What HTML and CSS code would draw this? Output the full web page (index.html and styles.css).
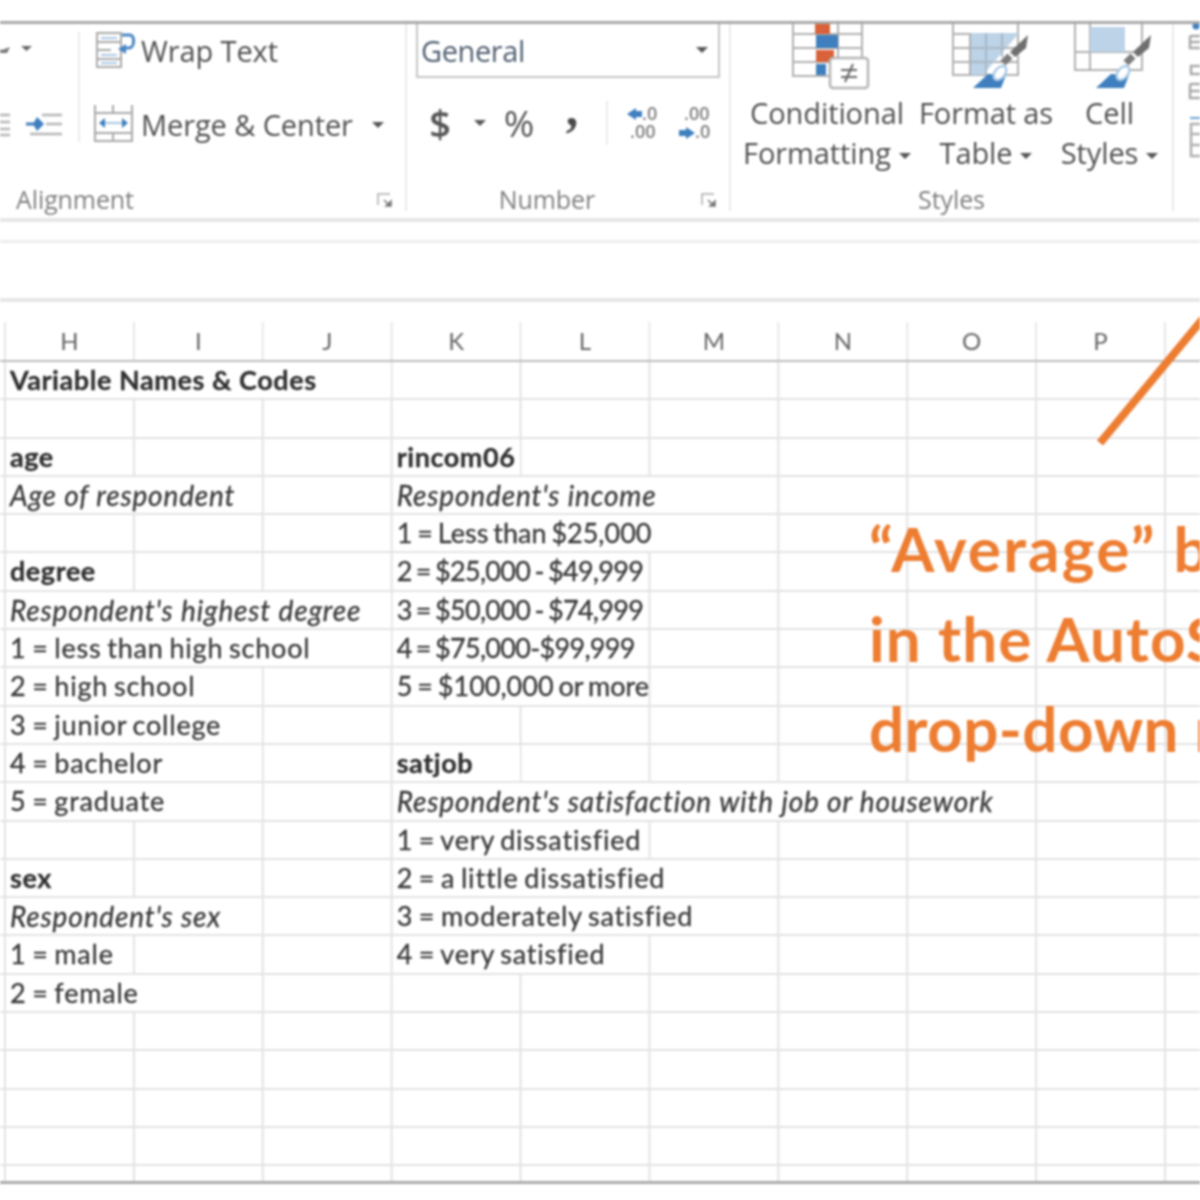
FILE: index.html
```html
<!DOCTYPE html>
<html lang="en">
<head>
<meta charset="utf-8">
<title>Excel ribbon and variable codes</title>
<link rel="stylesheet" href="styles.css">
</head>
<body>
<div class="page">
  <div class="ribbon">
    <section class="group g-align">
      <div class="group-body align-body">
        <div class="align-left">
          <svg class="ic" width="78" height="110" viewBox="0 32 78 110">
            <path d="M-6 47l8 3 8-3-3 6h-8z" fill="#777"/>
            <path d="M21 46h11l-5.500 5z" fill="#666"/>
            <g stroke="#b5b5b5" stroke-width="2.500">
              <path d="M-4 115h14M-4 122h14M-4 129h14M-4 135h14"/>
              <path d="M42 115h20M46 124h16M30 134h32"/>
            </g>
            <path d="M26 124h12" stroke="#3f7fbf" stroke-width="3"/>
            <path d="M37 117l7 7-7 7-4-7z" fill="#3f7fbf"/>
          </svg>
        </div>
        <div class="align-right">
          <div class="tool-row">
            <svg class="ic" width="42" height="40" viewBox="94 31 42 40">
              <rect x="97" y="33" width="24" height="34" fill="#fff" stroke="#a9a9a9" stroke-width="2"/>
              <path d="M97 42h24M97 50h14M97 59h24" stroke="#a9a9a9" stroke-width="2"/>
              <path d="M101 38h16M101 55h16M101 63h16" stroke="#a9c6e2" stroke-width="2"/>
              <path d="M122 35h8c5 0 5 13-1 13h-5" fill="none" stroke="#4a86c5" stroke-width="3"/>
              <path d="M118 49l8-5v10z" fill="#4a86c5"/>
            </svg>
            <span class="tool-label">Wrap Text</span>
          </div>
          <div class="tool-row merge-row">
            <svg class="ic" width="42" height="40" viewBox="94 105 42 40">
              <rect x="95" y="104" width="37" height="37" fill="#fff" stroke="#a9a9a9" stroke-width="2"/>
              <path d="M95 113h37M95 133h37M113 104v9M113 133v8" stroke="#a9a9a9" stroke-width="2"/>
              <path d="M102 123h24" stroke="#a9c6e2" stroke-width="2"/>
              <path d="M99 123l6-5v10zM128 123l-6-5v10z" fill="#3f7fbf"/>
            </svg>
            <span class="tool-label">Merge &amp; Center</span>
            <i class="caret merge-caret"></i>
          </div>
        </div>
      </div>
      <div class="group-foot foot-left">
        <span class="group-label">Alignment</span>
        <svg class="launcher" width="16" height="16" viewBox="0 0 16 16"><path d="M1 13V2h12" fill="none" stroke="#aaa" stroke-width="1.500"/><path d="M7 8l6 6M9 14h5V9z" stroke="#777" stroke-width="1.500" fill="#777"/></svg>
      </div>
    </section>

    <section class="group g-number">
      <div class="group-body">
        <div class="combo"><span>General</span><i class="caret"></i></div>
        <div class="num-row">
          <span class="sym sym-dollar">$</span>
          <i class="caret num-caret"></i>
          <span class="sym sym-pct">%</span>
          <span class="sym sym-comma">,</span>
          <span class="num-sep"></span>
          <svg class="ic dec-inc" width="36" height="40" viewBox="625 104 36 40">
            <path d="M627 115l9-6v3h6v6h-6v3z" fill="#3f7fbf"/>
            <text x="642" y="121" class="dec-text">.0</text>
            <text x="630" y="139" class="dec-text">.00</text>
          </svg>
          <svg class="ic dec-dec" width="36" height="40" viewBox="676 104 36 40">
            <text x="684" y="121" class="dec-text">.00</text>
            <path d="M695 134l-9-6v3h-7v6h7v3z" fill="#3f7fbf"/>
            <text x="695" y="139" class="dec-text">.0</text>
          </svg>
        </div>
      </div>
      <div class="group-foot foot-center foot-number">
        <span class="group-label">Number</span>
        <svg class="launcher" width="16" height="16" viewBox="0 0 16 16"><path d="M1 13V2h12" fill="none" stroke="#aaa" stroke-width="1.500"/><path d="M7 8l6 6M9 14h5V9z" stroke="#777" stroke-width="1.500" fill="#777"/></svg>
      </div>
    </section>

    <section class="group g-styles">
      <div class="group-body styles-body">
        <div class="style-btn btn-cond">
          <svg class="ic" width="168" height="66" viewBox="743 24 168 66">
            <path d="M793 24v52h69V24M793 34h69M793 48h69M793 62h69M838 24v52" fill="none" stroke="#b0b0b0" stroke-width="2"/>
            <rect x="815" y="23" width="15" height="11" fill="#d9623a"/>
            <rect x="816" y="35" width="22" height="13" fill="#3f7fbf"/>
            <rect x="816" y="50" width="18" height="12" fill="#d9623a"/>
            <rect x="816" y="64" width="10" height="11" fill="#3f7fbf"/>
            <rect x="830" y="58" width="38" height="30" rx="3" fill="#fff" stroke="#b5b5b5" stroke-width="2.500"/>
            <path d="M841 70h16M841 77h16M853 64l-8 18" stroke="#666" stroke-width="2" fill="none"/>
          </svg>
          <span class="style-line">Conditional</span>
          <span class="style-line">Formatting<i class="caret btn-caret"></i></span>
        </div>
        <div class="style-btn btn-table">
          <svg class="ic" width="132" height="66" viewBox="920 24 132 66">
            <path d="M953 24v51h65V24M953 34h65M953 48h65M953 62h65M970 34v41" fill="none" stroke="#b0b0b0" stroke-width="2"/>
            <path d="M971 33h48l-36 42h-12z" fill="#bcd3e8"/>
            <path d="M971 48h35M971 62h22M986 33v42M1002 33v24" stroke="#aab8c4" stroke-width="2"/>
            <path d="M1028 35l-2 13-11 9-5-5z" fill="#6f6f6f"/>
            <path d="M1010 56l-7 7" stroke="#7c7c7c" stroke-width="7"/>
            <path d="M973 88l15-14 18 1-5 13z" fill="#3f7fbf"/>
            <ellipse cx="1000" cy="73" rx="5" ry="8" transform="rotate(40 1000 73)" fill="#fff" stroke="#a9c9e6" stroke-width="2.500"/>
          </svg>
          <span class="style-line">Format as</span>
          <span class="style-line">Table<i class="caret btn-caret"></i></span>
        </div>
        <div class="style-btn btn-cell">
          <svg class="ic" width="97" height="66" viewBox="1061 24 97 66">
            <path d="M1075 24v46h67V24M1075 52h67M1090 24v46" fill="none" stroke="#b0b0b0" stroke-width="2"/>
            <rect x="1090" y="27" width="35" height="25" fill="#bcd3e8"/>
            <path d="M1151 35l-2 13-11 9-5-5z" fill="#6f6f6f"/>
            <path d="M1133 56l-7 7" stroke="#7c7c7c" stroke-width="7"/>
            <path d="M1096 88l15-14 18 1-5 13z" fill="#3f7fbf"/>
            <ellipse cx="1123" cy="73" rx="5" ry="8" transform="rotate(40 1123 73)" fill="#fff" stroke="#a9c9e6" stroke-width="2.500"/>
          </svg>
          <span class="style-line">Cell</span>
          <span class="style-line">Styles<i class="caret btn-caret"></i></span>
        </div>
      </div>
      <div class="group-foot foot-center"><span class="group-label">Styles</span></div>
    </section>

    <section class="g-rest">
      <svg class="ic" width="14" height="136" viewBox="1186 24 14 136">
        <circle cx="1196" cy="26" r="3.500" fill="#3f7fbf"/>
        <path d="M1190 36h10M1190 36v12h10M1190 42h10" stroke="#aaa" stroke-width="2.500" fill="none"/>
        <path d="M1200 66h-9v8h9M1190 84h10M1190 84v14h10M1190 91h10" stroke="#aaa" stroke-width="2.500" fill="none"/>
        <path d="M1190 118h10" stroke="#6fa3d6" stroke-width="2"/>
        <path d="M1200 124h-9v32h9M1191 134h9M1191 145h9" stroke="#b0b0b0" stroke-width="2.500" fill="none"/>
      </svg>
    </section>
  </div>

  <div class="formula-top"></div>
  <div class="formula-bar"></div>

  <div class="sheet">
    <div class="row col-head">
      <span class="head">H</span><span class="head">I</span><span class="head">J</span>
      <span class="head">K</span><span class="head">L</span><span class="head">M</span>
      <span class="head">N</span><span class="head">O</span><span class="head">P</span>
    </div>
    <div class="row"><span class="cell h s3 b">Variable Names &amp; Codes</span></div>
    <div class="row"></div>
    <div class="row"><span class="cell h b">age</span><span class="cell k b">rincom06</span></div>
    <div class="row"><span class="cell h s2 it">Age of respondent</span><span class="cell k s3 it">Respondent's income</span></div>
    <div class="row"><span class="cell k s3 flat">1 = Less than $25,000</span></div>
    <div class="row"><span class="cell h b">degree</span><span class="cell k s2 tight">2 = $25,000 - $49,999</span></div>
    <div class="row"><span class="cell h s3 it">Respondent's highest degree</span><span class="cell k s2 tight">3 = $50,000 - $74,999</span></div>
    <div class="row"><span class="cell h s3">1 = less than high school</span><span class="cell k s2 tight">4 = $75,000-$99,999</span></div>
    <div class="row"><span class="cell h s2">2 = high school</span><span class="cell k s2 flat">5 = $100,000 or more</span></div>
    <div class="row"><span class="cell h s2">3 = junior college</span></div>
    <div class="row"><span class="cell h s2">4 = bachelor</span><span class="cell k b">satjob</span></div>
    <div class="row"><span class="cell h s2">5 = graduate</span><span class="cell k s5 it">Respondent's satisfaction with job or housework</span></div>
    <div class="row"><span class="cell k s2">1 = very dissatisfied</span></div>
    <div class="row"><span class="cell h b">sex</span><span class="cell k s3">2 = a little dissatisfied</span></div>
    <div class="row"><span class="cell h s2 it">Respondent's sex</span><span class="cell k s3">3 = moderately satisfied</span></div>
    <div class="row"><span class="cell h">1 = male</span><span class="cell k s2">4 = very satisfied</span></div>
    <div class="row"><span class="cell h s2">2 = female</span></div>
    <div class="row"></div>
    <div class="row"></div>
    <div class="row"></div>
    <div class="row"></div>
    <div class="row row-tail"></div>
  </div>

  <svg class="arrow" width="1200" height="1200" viewBox="0 0 1200 1200"><path d="M1100 443L1206 315" stroke="#ed7d31" stroke-width="8" fill="none"/></svg>
  <div class="callout">
    <div class="line-a">“Average” button</div>
    <div class="line-b">in the AutoSum</div>
    <div class="line-c">drop-down menu</div>
  </div>
</div>
</body>
</html>
```
FILE: styles.css
```css
* { box-sizing: border-box; }
html, body { margin: 0; padding: 0; background: #fff; overflow: hidden; }
.page {
  position: relative;
  width: 1200px;
  height: 1200px;
  padding-top: 21px;
  overflow: hidden;
  filter: blur(0.9px);
  font-family: "Open Sans", "Liberation Sans", sans-serif;
  color: #505050;
}
.ic { display: block; flex: none; }

/* ribbon */
.ribbon {
  display: flex;
  align-items: flex-start;
  height: 201px;
  border-top: 3px solid #a9a9a9;
  border-bottom: 4px solid #e6e6e6;
}
.group {
  height: 187px;
  display: flex;
  flex-direction: column;
  border-right: 2px solid #ebebeb;
}
.g-align { width: 407px; }
.g-number { width: 324px; }
.g-styles { width: 443px; }
.g-rest { flex: 1; display: flex; justify-content: flex-end; padding-right: 0; }
.group-body { height: 161px; }
.group-foot { height: 26px; display: flex; align-items: center; position: relative; }
.group-label { font-size: 25px; line-height: 26px; color: #808080; letter-spacing: -0.1px; }
.foot-left { padding: 2px 13px 0 16px; justify-content: space-between; }
.foot-center { justify-content: center; padding-top: 2px; }
.foot-number { padding-right: 42px; }
.launcher { position: absolute; right: 12px; top: 7px; }

.caret {
  display: inline-block;
  width: 0;
  height: 0;
  border-left: 6px solid transparent;
  border-right: 6px solid transparent;
  border-top: 6px solid #555;
}

/* alignment */
.align-body { display: flex; }
.align-left {
  width: 80px;
  height: 110px;
  margin-top: 8px;
  border-right: 2px solid #ebebeb;
}
.align-right { padding: 7px 0 0 14px; }
.tool-row { display: flex; align-items: center; height: 40px; gap: 5px; }
.merge-row { margin-top: 34px; }
.tool-label { font-size: 29px; line-height: 40px; white-space: nowrap; letter-spacing: -0.1px; }
.merge-caret { margin-left: 14px; }

/* number */
.combo {
  margin: 0 9px;
  height: 54px;
  padding: 0 10px 0 3px;
  display: flex;
  align-items: center;
  justify-content: space-between;
  border: 2px solid #c6c6c6;
  border-top: 0;
  font-size: 29px;
  letter-spacing: -0.4px;
  color: #4f5f70;
}
.num-row {
  display: flex;
  align-items: center;
  height: 44px;
  margin-top: 23px;
  padding-left: 18px;
}
.sym { display: block; text-align: center; line-height: 44px; color: #555; }
.sym-dollar { width: 30px; font-size: 38px; font-weight: 600; }
.num-caret { margin-left: 19px; }
.sym-pct { width: 40px; margin-left: 13px; font-size: 37px; }
.sym-comma {
  width: 24px;
  height: 44px;
  margin-left: 21px;
  font-family: "Liberation Serif", serif;
  font-size: 50px;
  font-weight: 700;
  line-height: 14px;
  color: #4a4a4a;
}
.num-sep { display: block; width: 2px; height: 44px; margin-left: 22px; background: #ebebeb; }
.dec-inc { margin-left: 17px; }
.dec-dec { margin-left: 15px; }
.dec-text { font-size: 18px; font-weight: 600; fill: #808080; }

/* styles */
.styles-body { display: flex; gap: 9px; padding-left: 12px; }
.style-btn { display: flex; flex-direction: column; align-items: center; }
.btn-cond { width: 168px; }
.btn-table { width: 132px; }
.btn-cell { width: 97px; }
.style-line { font-size: 29px; line-height: 40px; white-space: nowrap; letter-spacing: -0.1px; }
.style-btn .ic + .style-line { margin-top: 3px; }
.btn-caret { margin-left: 8px; vertical-align: 5px; }

/* formula bar */
.formula-top { height: 21px; border-bottom: 3px solid #ededed; }
.formula-bar { height: 59px; border-bottom: 4px solid #e6e6e6; }

/* sheet */
.sheet { margin-top: 20px; }
.row {
  display: grid;
  grid-template-columns: 5px repeat(9, 128.9px) 1fr;
  height: 38.3px;
  border-bottom: 2px solid #e3e3e3;
  background-image: linear-gradient(90deg, #e3e3e3 0, #e3e3e3 2px, transparent 2px);
  background-size: 128.9px 100%;
  background-position: 4px 0;
  background-repeat: repeat-x;
}
.col-head {
  height: 40px;
  border-bottom: 2px solid #bcbcbc;
  background-image: linear-gradient(90deg, #e8e8e8 0, #e8e8e8 2px, transparent 2px);
}
.head {
  font-family: Lato, "Liberation Sans", sans-serif;
  font-size: 24px;
  line-height: 37px;
  text-align: center;
  color: #666;
}
.head:first-child { grid-column-start: 2; }
.row-tail { height: 18px; border-bottom: 3px solid #ababab; }
.cell {
  margin: 0 1px 0 2px;
  padding-left: 3px;
  background: #fff;
  font-family: Lato, "Liberation Sans", sans-serif;
  font-size: 27px;
  line-height: 36px;
  letter-spacing: 0.8px;
  word-spacing: -2px;
  white-space: nowrap;
  color: #383838;
  -webkit-text-stroke: 0.3px #383838;
}
.h { grid-column: 2 / span 1; }
.k { grid-column: 5 / span 1; }
.h.s2, .k.s2 { grid-column-end: span 2; }
.h.s3, .k.s3 { grid-column-end: span 3; }
.k.s5 { grid-column-end: span 5; }
.flat { letter-spacing: 0; }
.tight { letter-spacing: -0.7px; }
.b { font-weight: 700; letter-spacing: 0.55px; word-spacing: 0; color: #2e2e2e; }
.it { font-size: 28px; font-style: italic; letter-spacing: 0.85px; word-spacing: 0; }

/* annotation over the sheet */
.arrow { position: absolute; left: 0; top: 0; }
.callout {
  position: absolute;
  left: 869px;
  top: 503px;
  width: 500px;
  font-family: Lato, "Liberation Sans", sans-serif;
  font-size: 62px;
  font-weight: 700;
  line-height: 90px;
  white-space: nowrap;
  color: #ed7d31;
}
.line-a { letter-spacing: 2.2px; }
.line-b { letter-spacing: 1.1px; }
.line-c { letter-spacing: 0.4px; }
```
